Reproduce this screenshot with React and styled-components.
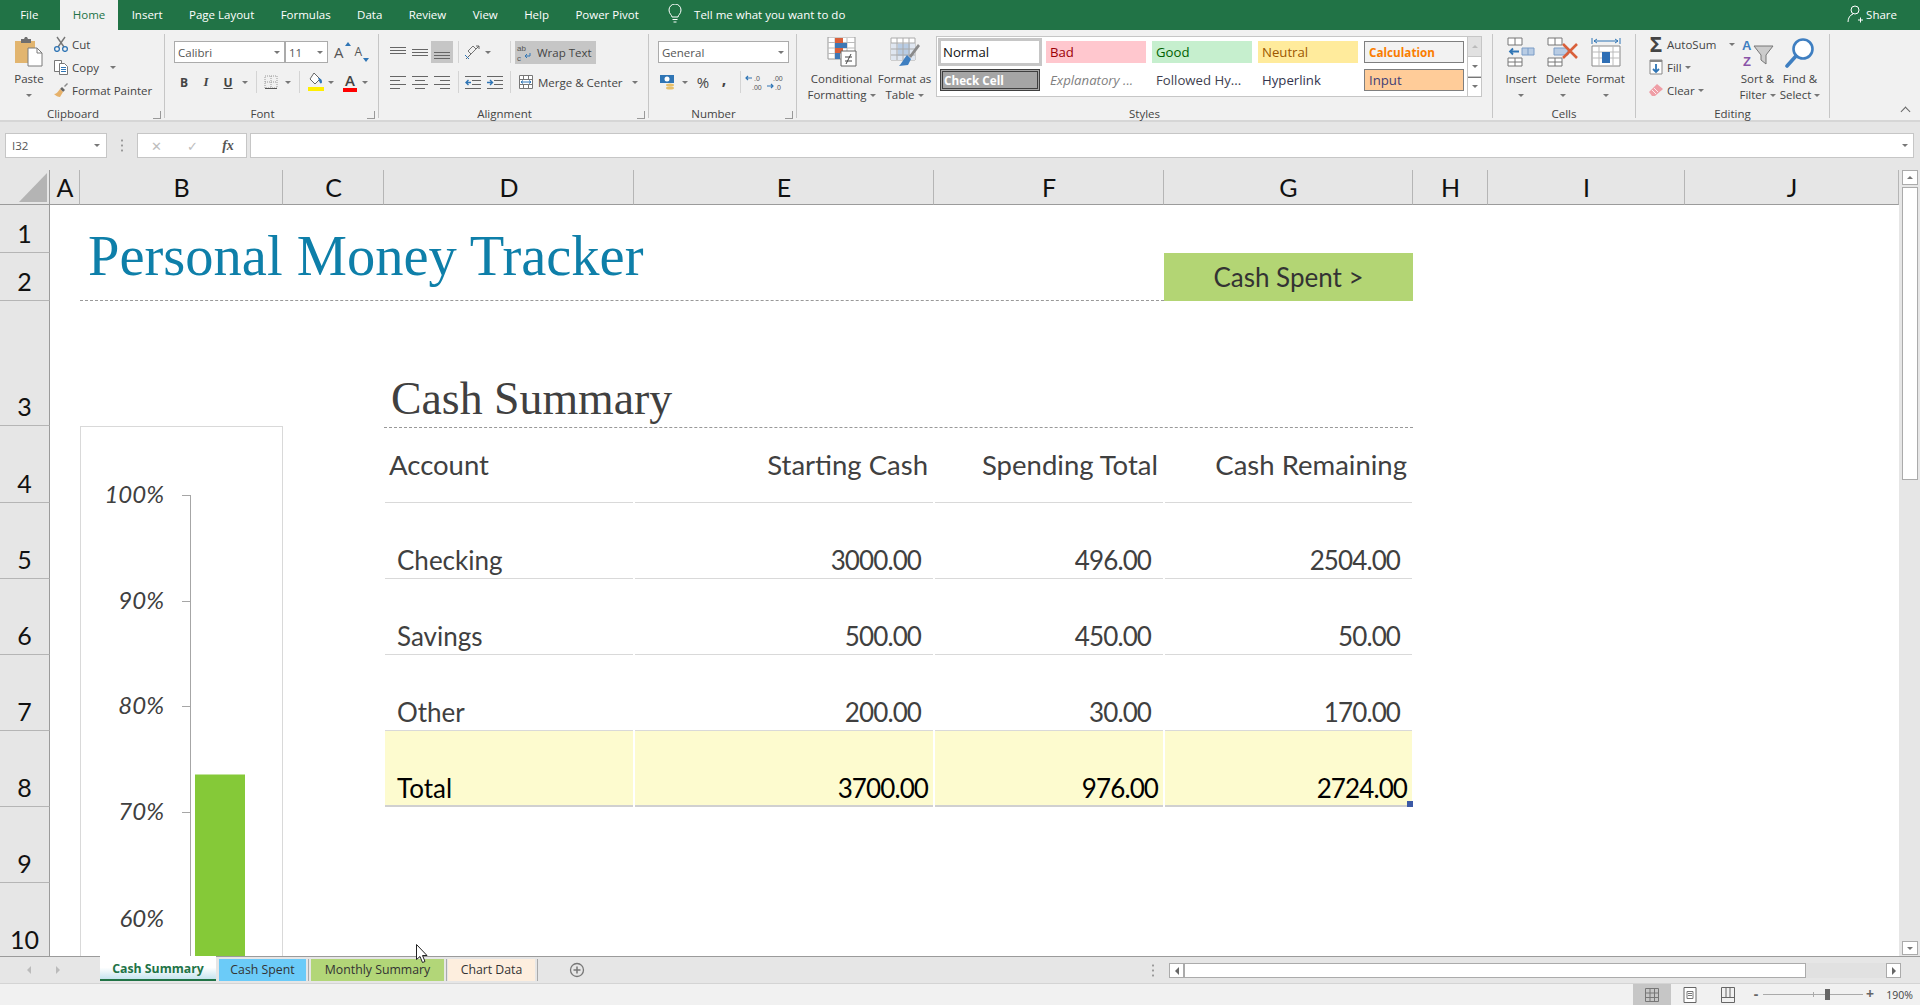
import React from 'react'
import styled, { createGlobalStyle } from 'styled-components'

const UI = '"Open Sans", "Noto Sans", sans-serif'
const CALIBRI = 'Lato, "Noto Sans", sans-serif'
const SERIF = '"Liberation Serif", serif'
const ARIAL = '"Liberation Sans", sans-serif'

const GlobalStyle = createGlobalStyle`
  html, body { margin: 0; padding: 0; background: #fff; overflow: hidden; }
  * { box-sizing: border-box; }
`

function Svg({ w = 16, h = 16, children }) {
    return <svg width={w} height={h} viewBox={`0 0 ${w} ${h}`} style={{ display: 'block' }}>{children}</svg>
}

const PasteIcon = () => (
    <Svg w={30} h={30}>
        <path d="M1 4h20v22H1z" fill="#e2b56f" />
        <path d="M7 2h3l1-2h2l1 2h3v4H7z" fill="#6f6f6f" />
        <path d="M14 11h9l5 5v13H14z" fill="#fff" stroke="#7a7a7a" />
        <path d="M23 11v5h5" fill="none" stroke="#7a7a7a" />
    </Svg>
)
const CutIcon = () => (
    <Svg>
        <path d="M4 1l7 10M12 1L5 11" stroke="#777" strokeWidth="1.4" fill="none" />
        <circle cx="4" cy="13" r="2.4" fill="none" stroke="#2f75b5" strokeWidth="1.3" />
        <circle cx="12" cy="13" r="2.4" fill="none" stroke="#2f75b5" strokeWidth="1.3" />
    </Svg>
)
const CopyIcon = () => (
    <Svg>
        <path d="M1.5 1.5h7v11h-7z" fill="#fff" stroke="#777" />
        <path d="M6.5 4.5h5l3 3v8h-8z" fill="#fff" stroke="#777" />
        <path d="M8 8.5h5M8 10.5h5M8 12.5h5" stroke="#2f75b5" />
    </Svg>
)
const BrushIcon = () => (
    <Svg>
        <path d="M9 5l3 3-2 2-3-3z" fill="#666" />
        <path d="M11 4l3-3 1 1-3 3z" fill="#8a8a8a" />
        <path d="M7 7l3 3-3 5c-2 0-4-1-6-3 2 0 4-2 6-5z" fill="#e6b16a" />
    </Svg>
)
const TinyTriangle = ({ down }) => (
    <Svg w={6} h={4}><path d={down ? 'M0 0h6L3 4z' : 'M3 0l3 4H0z'} fill="#2f75b5" /></Svg>
)
const BordersIcon = () => (
    <Svg>
        <path d="M2 2h12v12H2z" fill="none" stroke="#999" strokeDasharray="1 1" />
        <path d="M8 2v12M2 8h12" stroke="#999" strokeDasharray="1 1" />
        <path d="M2 14.5h12" stroke="#555" />
    </Svg>
)
const FillIcon = () => (
    <Svg h={20}>
        <path d="M6 1l6 6-5 5-5-5z" fill="#fff" stroke="#666" />
        <path d="M10 6c2 0 4 1 4 4 0 1-1 2-2 1-1-2-1-3-2-5z" fill="#2f75b5" />
        <path d="M0 15h16v4H0z" fill="#ffee00" />
    </Svg>
)
const Lines = ({ rows }) => (
    <Svg w={18} h={16}>
        {rows.map(([x1, x2, y]) => <path key={y} d={`M${x1} ${y}.5H${x2}`} stroke="#666" />)}
    </Svg>
)
const OrientIcon = () => (
    <Svg w={18} h={18}>
        <path d="M2 16L15 3M12 3h3v3" stroke="#666" fill="none" />
        <path d="M4 8l5-5 3 3-5 5z" fill="none" stroke="#777" />
        <path d="M1 12l4 4" stroke="#2f75b5" />
    </Svg>
)
const WrapIcon = () => (
    <Svg w={18} h={20}>
        <text x="1" y="9" fontFamily={ARIAL} fontSize="8" fill="#555">ab</text>
        <text x="1" y="18.500" fontFamily={ARIAL} fontSize="8" fill="#555">c</text>
        <path d="M14 11v3H9M11 12l-2 2 2 2" fill="none" stroke="#2f75b5" />
    </Svg>
)
const IndentIcon = ({ flip }) => (
    <Svg w={18} h={16}>
        <path d="M1 2.5h16M8 6.5h9M8 10.5h9M1 14.5h16" stroke="#666" />
        <path d={flip ? 'M1 8.5h5M4 6l2.500 2.500L4 11' : 'M7 8.500H2M4.500 6L2 8.500 4.500 11'} fill="none" stroke="#2f75b5" strokeWidth="1.4" />
    </Svg>
)
const MergeIcon = () => (
    <Svg>
        <path d="M1.500 1.500h13v13h-13z" fill="#fff" stroke="#777" />
        <path d="M1 5.500h14M1 10.500h14M5.500 1v4M10.500 1v4M5.500 11v4M10.500 11v4" stroke="#777" />
        <path d="M3 8h10M5 6.500L3 8l2 1.500M11 6.500L13 8l-2 1.500" stroke="#2f75b5" fill="none" />
    </Svg>
)
const MoneyIcon = () => (
    <Svg w={18} h={18}>
        <path d="M1 2h14v8H1z" fill="#2f75b5" />
        <circle cx="8" cy="6" r="2.500" fill="#fff" />
        <ellipse cx="11" cy="12" rx="4" ry="1.500" fill="#e8c06a" />
        <ellipse cx="11" cy="15" rx="4" ry="1.500" fill="#e8c06a" />
    </Svg>
)
const DecimalIcon = ({ more }) => (
    <Svg w={20} h={18}>
        <text x={more ? 9 : 7} y="8" fontFamily={ARIAL} fontSize="7" fill="#555">{more ? '.0' : '.00'}</text>
        <text x={more ? 7 : 9} y="16.500" fontFamily={ARIAL} fontSize="7" fill="#555">{more ? '.00' : '.0'}</text>
        <path d={more ? 'M7 5H1M3 3L1 5l2 2' : 'M1 13h6M5 11l2 2-2 2'} fill="none" stroke="#2f75b5" strokeWidth="1.200" />
    </Svg>
)
const CondIcon = () => (
    <Svg w={30} h={30}>
        <path d="M1 0h27v22H1z" fill="#fff" stroke="#999" />
        <path d="M8 1v21M20 1v21M1 5.500h27M1 11h27M1 16.500h27" stroke="#bbb" />
        <path d="M8 1h8v5H8z" fill="#d9603b" />
        <path d="M8 6h12v5H8z" fill="#3e78b5" />
        <path d="M8 11h8v5H8z" fill="#d9603b" />
        <path d="M8 16h5v6H8z" fill="#3e78b5" />
        <path d="M14 14h15v15H14z" fill="#fff" stroke="#666" />
        <path d="M18 20h7M18 24h7M24 17l-5 10" stroke="#444" />
    </Svg>
)
const TableIcon = () => (
    <Svg w={30} h={30}>
        <path d="M1 1h24v22H1z" fill="#fff" stroke="#aaa" />
        <path d="M1 6h24v17H1z" fill="#dfe6f0" />
        <path d="M8 7h12v12H8z" fill="#b8cce4" />
        <path d="M7 1v22M13 1v22M19 1v22M1 6h24M1 12h24M1 18h24" stroke="#aaa" />
        <path d="M19 19L28 7l2 2-9 12z" fill="#8a8a8a" />
        <path d="M17 18l4 4-3 6-9 1c2-2 4-6 8-11z" fill="#3f7fc1" />
    </Svg>
)
const InsertIcon = () => (
    <Svg w={28} h={30}>
        <path d="M1 1h14v7H1zM8 1v7M1 21h14v8H1zM8 21v8M1 25h14" fill="#fff" stroke="#777" />
        <path d="M15 11h12v7H15z" fill="#b8cce4" stroke="#7a9cc6" />
        <path d="M21 11v7" stroke="#7a9cc6" />
        <path d="M12 14.500H3M6 11.500l-3 3 3 3" fill="none" stroke="#2f75b5" strokeWidth="1.800" />
    </Svg>
)
const DeleteIcon = () => (
    <Svg w={32} h={30}>
        <path d="M1 1h14v7H1zM8 1v7M1 21h14v8H1zM8 21v8M1 25h14" fill="#fff" stroke="#777" />
        <path d="M7 11h14v7H7z" fill="#b8cce4" stroke="#7a9cc6" />
        <path d="M16 7l14 14M30 7L16 21" stroke="#d9603b" strokeWidth="2.600" />
    </Svg>
)
const FormatIcon = () => (
    <Svg w={30} h={32}>
        <path d="M1 1v6M29 1v6M3 4h24M3 4l3-2M3 4l3 2M27 4l-3-2M27 4l-3 2" fill="none" stroke="#2f75b5" />
        <path d="M1 9h28v20H1z" fill="#fff" stroke="#888" />
        <path d="M8 9v20M22 9v20M1 15h28M1 21h28" stroke="#bbb" />
        <path d="M11 15h8v11h-8z" fill="#2f6fb5" />
    </Svg>
)
const FillDownIcon = () => (
    <Svg>
        <path d="M2 1h12v14H2z" fill="#fff" stroke="#888" />
        <path d="M2 1h12v2H2z" fill="#888" />
        <path d="M8 5v8M5 10l3 3 3-3" stroke="#2f75b5" strokeWidth="1.800" fill="none" />
    </Svg>
)
const EraserIcon = () => (
    <Svg>
        <path d="M1 10l8-8 6 5-8 7H4z" fill="#ef9ea6" />
        <path d="M4 8l4 4M6 6l4 4" stroke="#fff" strokeWidth=".8" />
    </Svg>
)
const SortIcon = () => (
    <Svg w={32} h={31}>
        <text x="0" y="12.500" fontFamily={ARIAL} fontSize="13" fontWeight="700" fill="#3f7fc1">A</text>
        <text x="1" y="28.500" fontFamily={ARIAL} fontSize="13" fontWeight="700" fill="#8a54a8">Z</text>
        <path d="M12 9h19l-7 9v9l-5-4v-5z" fill="#ccc" stroke="#777" />
    </Svg>
)
const FindIcon = () => (
    <Svg w={30} h={32}>
        <circle cx="18" cy="12" r="9.500" fill="#fff" stroke="#3f7fc1" strokeWidth="2.600" />
        <path d="M11 19L2 29" stroke="#3f7fc1" strokeWidth="3.600" strokeLinecap="round" />
    </Svg>
)
const BulbIcon = () => (
    <Svg w={14} h={20}>
        <path d="M4 13c0-2-3-3-3-7a6 6 0 0 1 12 0c0 4-3 5-3 7zM4.500 15.500h5M5.500 18h3" fill="none" stroke="#fff" />
    </Svg>
)
const PersonIcon = () => (
    <Svg w={16} h={18}>
        <circle cx="8" cy="5" r="4" fill="none" stroke="#fff" />
        <path d="M1 17c0-4 2-7 5-8M11 15h5M13.500 12.500v5" fill="none" stroke="#fff" />
    </Svg>
)
const PlusIcon = () => (
    <Svg w={16} h={16}>
        <circle cx="8" cy="8" r="6.500" fill="none" stroke="#777" strokeWidth="1.300" />
        <path d="M4.500 8h7M8 4.500v7" stroke="#777" strokeWidth="1.500" />
    </Svg>
)
const GridViewIcon = () => (
    <Svg w={14} h={14}>
        <path d="M.5.500h13v13H.5zM5 .5v13M9.500.5v13M.5 5h13M.5 9.500h13" fill="none" stroke="#777" />
    </Svg>
)
const PageViewIcon = () => (
    <Svg w={14} h={16}>
        <path d="M1 .5h12v15H1z" fill="#fff" stroke="#666" />
        <path d="M4 4.500h6v7H4zM5 6.500h4M5 8.500h4" fill="none" stroke="#777" />
    </Svg>
)
const BreakViewIcon = () => (
    <Svg w={14} h={16}>
        <path d="M.5.500h13v15H.5zM.5 10.500h13M5 .5v10M9 .5v10" fill="none" stroke="#666" />
    </Svg>
)

const tabs = ['File', 'Home', 'Insert', 'Page Layout', 'Formulas', 'Data', 'Review', 'View', 'Help', 'Power Pivot']
const columns = ['A', 'B', 'C', 'D', 'E', 'F', 'G', 'H', 'I', 'J']
const rowNumbers = [1, 2, 3, 4, 5, 6, 7, 8, 9, 10]
const accounts = [
    ['Checking', '3000.00', '496.00', '2504.00'],
    ['Savings', '500.00', '450.00', '50.00'],
    ['Other', '200.00', '30.00', '170.00'],
]
const ticks = [[69, '100%'], [175, '90%'], [280, '80%'], [386, '70%'], [492.5, '60%']]
const cellStyles = [
    ['Bad', 'bad'], ['Good', 'good'], ['Neutral', 'neutral'], ['Calculation', 'calc'],
    ['Check Cell', 'check'], ['Explanatory ...', 'explain'], ['Followed Hy...', 'followed'], ['Hyperlink', 'link'], ['Input', 'input'],
]

function BigButton({ icon, lines, w, caret, trailing }) {
    return (
        <BigWrap $w={w}>
            <BigIcon>{icon}</BigIcon>
            {lines.map((line, i) => (
                <BigLine key={line}>
                    {line}
                    {trailing && i === lines.length - 1 && <Caret $ml={3} />}
                </BigLine>
            ))}
            {caret && <BigLine><Caret /></BigLine>}
        </BigWrap>
    )
}

function Small({ icon, label, children }) {
    return (
        <SmallRow>
            <SmallIcon>{icon}</SmallIcon>
            {label}
            {children}
        </SmallRow>
    )
}

function Group({ label, w, launcher, children }) {
    return (
        <GroupWrap $w={w}>
            <GroupBody>{children}</GroupBody>
            <GroupLabel $launcher={launcher}>
                {label}
                {launcher && <Launcher />}
            </GroupLabel>
        </GroupWrap>
    )
}

export default function App() {
    return (
        <Page>
            <GlobalStyle />
            <TitleBar>
                {tabs.map(t => <Tab key={t} $active={t === 'Home'}>{t}</Tab>)}
                <TellMe><BulbIcon /> Tell me what you want to do</TellMe>
                <Share><PersonIcon /> Share</Share>
            </TitleBar>

            <Ribbon>
                <Group label="Clipboard" w={165} launcher>
                    <Row $pl={6}>
                        <BigButton w={46} icon={<PasteIcon />} lines={['Paste']} caret />
                        <SmallColumn $w={112}>
                            <Small icon={<CutIcon />} label="Cut" />
                            <Small icon={<CopyIcon />} label="Copy"><Caret $ml={8} /></Small>
                            <Small icon={<BrushIcon />} label="Format Painter" />
                        </SmallColumn>
                    </Row>
                </Group>

                <Group label="Font" w={214} launcher>
                    <ToolRows $pl={8}>
                        <ToolRow>
                            <ComboBox $w={111} $ml={1}>Calibri<Caret $auto /></ComboBox>
                            <ComboBox $w={43}>11<Caret $auto /></ComboBox>
                            <FontStep $ml={6}>A<TinyTriangle /></FontStep>
                            <FontStep $small $ml={4}>A<TinyTriangle down /></FontStep>
                        </ToolRow>
                        <ToolRow>
                            <Tool $w={22}><Bold>B</Bold></Tool>
                            <Tool $w={22}><Ital>I</Ital></Tool>
                            <Tool $w={22}><Under>U</Under></Tool>
                            <CaretBox $w={12}><Caret /></CaretBox>
                            <Sep $ml={5} $mr={3} />
                            <Tool $w={22}><BordersIcon /></Tool>
                            <CaretBox $w={12}><Caret /></CaretBox>
                            <Sep $ml={5} $mr={5} />
                            <Tool $w={22}><FillIcon /></Tool>
                            <CaretBox $w={8}><Caret /></CaretBox>
                            <Tool $w={22} $ml={4}><FontColor>A</FontColor></Tool>
                            <CaretBox $w={8}><Caret /></CaretBox>
                        </ToolRow>
                    </ToolRows>
                </Group>

                <Group label="Alignment" w={270} launcher>
                    <ToolRows $pl={8}>
                        <ToolRow>
                            <Tool $w={22}><Lines rows={[[1, 17, 3], [1, 17, 6], [1, 17, 9]]} /></Tool>
                            <Tool $w={22}><Lines rows={[[1, 17, 5], [1, 17, 8], [1, 17, 11]]} /></Tool>
                            <Tool $w={22} $active><Lines rows={[[1, 17, 8], [1, 17, 11], [1, 17, 14]]} /></Tool>
                            <Sep $ml={5} $mr={3} />
                            <Tool $w={22}><OrientIcon /></Tool>
                            <CaretBox $w={8}><Caret /></CaretBox>
                            <Sep $ml={18} $mr={4} />
                            <WrapButton><WrapIcon />Wrap Text</WrapButton>
                        </ToolRow>
                        <ToolRow>
                            <Tool $w={22}><Lines rows={[[1, 17, 2], [1, 11, 6], [1, 17, 10], [1, 11, 14]]} /></Tool>
                            <Tool $w={22}><Lines rows={[[1, 17, 2], [4, 14, 6], [1, 17, 10], [4, 14, 14]]} /></Tool>
                            <Tool $w={22}><Lines rows={[[1, 17, 2], [7, 17, 6], [1, 17, 10], [7, 17, 14]]} /></Tool>
                            <Sep $ml={5} $mr={3} />
                            <Tool $w={22}><IndentIcon /></Tool>
                            <Tool $w={22}><IndentIcon flip /></Tool>
                            <Sep $ml={4} $mr={7} />
                            <MergeButton><MergeIcon />Merge &amp; Center<Caret $ml={5} /></MergeButton>
                        </ToolRow>
                    </ToolRows>
                </Group>

                <Group label="Number" w={148} launcher>
                    <ToolRows $pl={8}>
                        <ToolRow>
                            <ComboBox $w={131} $ml={1}>General<Caret $auto /></ComboBox>
                        </ToolRow>
                        <ToolRow>
                            <Tool $w={22}><MoneyIcon /></Tool>
                            <CaretBox $w={12}><Caret /></CaretBox>
                            <Tool $w={22} $ml={1}><Percent>%</Percent></Tool>
                            <Tool $w={22} $ml={-1}><Comma>,</Comma></Tool>
                            <Sep $ml={5} $mr={3} />
                            <Tool $w={22}><DecimalIcon more /></Tool>
                            <Tool $w={22} $ml={-1}><DecimalIcon /></Tool>
                        </ToolRow>
                    </ToolRows>
                </Group>

                <Group label="Styles" w={696}>
                    <Row $pl={13}>
                        <BigButton w={63} icon={<CondIcon />} lines={['Conditional', 'Formatting']} trailing />
                        <BigButton w={63} icon={<TableIcon />} lines={['Format as', 'Table']} trailing />
                        <Gallery>
                            <StyleGrid>
                                <NormalStyle>Normal</NormalStyle>
                                {cellStyles.map(([name, kind]) => <StyleCell key={name} $kind={kind}>{name}</StyleCell>)}
                            </StyleGrid>
                            <GalleryScroll>
                                <GalleryBtn $off><Caret $up $light /></GalleryBtn>
                                <GalleryBtn><Caret /></GalleryBtn>
                                <GalleryBtn $more><Caret /></GalleryBtn>
                            </GalleryScroll>
                        </Gallery>
                    </Row>
                </Group>

                <Group label="Cells" w={143}>
                    <Row $pl={7}>
                        <BigButton w={42} icon={<InsertIcon />} lines={['Insert']} caret />
                        <BigButton w={42} icon={<DeleteIcon />} lines={['Delete']} caret />
                        <BigButton w={43} icon={<FormatIcon />} lines={['Format']} caret />
                    </Row>
                </Group>

                <Group label="Editing" w={194}>
                    <Row $pl={11}>
                        <SmallColumn $w={88}>
                            <Small icon={<Sigma>Σ</Sigma>} label="AutoSum"><Caret $ml={10} /></Small>
                            <Small icon={<FillDownIcon />} label="Fill"><Caret $ml={0} /></Small>
                            <Small icon={<EraserIcon />} label="Clear"><Caret $ml={0} /></Small>
                        </SmallColumn>
                        <BigButton w={43} icon={<SortIcon />} lines={['Sort &', 'Filter']} trailing />
                        <BigButton w={42} icon={<FindIcon />} lines={['Find &', 'Select']} trailing />
                    </Row>
                </Group>
                <Collapse><CollapseMark /></Collapse>
            </Ribbon>

            <FormulaBar>
                <NameBox>I32<Caret $auto /></NameBox>
                <Grip />
                <FormulaButtons>
                    <FxMark $gray>✕</FxMark>
                    <FxMark $gray>✓</FxMark>
                    <FxMark $serif>fx</FxMark>
                </FormulaButtons>
                <FormulaInput><Caret $auto /></FormulaInput>
            </FormulaBar>

            <SheetArea>
                <Sheet>
                    <Corner><CornerMark /></Corner>
                    {columns.map(c => <ColHead key={c}>{c}</ColHead>)}
                    {rowNumbers.map(n => <RowHead key={n} $row={n + 1}>{n}</RowHead>)}

                    <TitleCell>Personal Money Tracker</TitleCell>
                    <CashButton>Cash Spent &gt;</CashButton>
                    <SummaryTitle>Cash Summary</SummaryTitle>

                    <HeadCell $col={5} $left>Account</HeadCell>
                    <HeadCell $col={6}>Starting Cash</HeadCell>
                    <HeadCell $col={7}>Spending Total</HeadCell>
                    <HeadCell $col={8}>Cash Remaining</HeadCell>

                    {accounts.map((row, r) => row.map((value, c) => (
                        <DataCell key={value + c} $col={c + 5} $row={r + 6} $left={c === 0}>{value}</DataCell>
                    )))}

                    <TotalCell $col={5} $left>Total</TotalCell>
                    <TotalCell $col={6}>3700.00</TotalCell>
                    <TotalCell $col={7}>976.00</TotalCell>
                    <TotalCell $col={8}>2724.00<FillHandle /></TotalCell>

                    <Chart>
                        <svg width="201" height="530" viewBox="1 1 201 530" style={{ display: 'block' }}>
                            <path d="M110.500 69V530" stroke="#a6a6a6" />
                            {ticks.map(([y, label]) => (
                                <g key={label}>
                                    <path d={`M102 ${y}.5H110`} stroke="#a6a6a6" />
                                    <ChartLabel x="84" y={y + 8}>{label}</ChartLabel>
                                </g>
                            ))}
                            <rect x="115" y="348.500" width="50" height="182" fill="#85c938" />
                        </svg>
                    </Chart>
                </Sheet>
                <VScroll>
                    <ScrollBtn $h={15}><Caret $up /></ScrollBtn>
                    <VThumb />
                    <ScrollBtn $h={14}><Caret /></ScrollBtn>
                </VScroll>
            </SheetArea>

            <TabStrip>
                <TabNav><NavArrow $left /><NavArrow /></TabNav>
                <ActiveSheet>Cash Summary</ActiveSheet>
                <SheetTab $bg="#6bcbf8" $w={87} $ml={3}>Cash Spent</SheetTab>
                <SheetTab $bg="#b2d678" $w={133} $ml={5}>Monthly Summary</SheetTab>
                <SheetTab $bg="#fdeede" $w={87} $ml={4}>Chart Data</SheetTab>
                <AddSheet><PlusIcon /></AddSheet>
                <HScroll>
                    <HGrip />
                    <HBtn><NavArrow $left $dark /></HBtn>
                    <HThumb />
                    <HTrack />
                    <HBtn><NavArrow $dark /></HBtn>
                </HScroll>
            </TabStrip>

            <StatusBar>
                <ViewBtn $active><GridViewIcon /></ViewBtn>
                <ViewBtn><PageViewIcon /></ViewBtn>
                <ViewBtn><BreakViewIcon /></ViewBtn>
                <ZoomSign $ml={4}>-</ZoomSign>
                <ZoomTrack><ZoomCenter /><ZoomThumb /></ZoomTrack>
                <ZoomSign>+</ZoomSign>
                <ZoomValue>190%</ZoomValue>
            </StatusBar>

            <Pointer>
                <svg width="12" height="19" viewBox="0 0 12 19" style={{ display: 'block' }}>
                    <path d="M.5.500v15l3.500-3 2.500 6 2.500-1-2.500-6H11z" fill="#fff" stroke="#222" />
                </svg>
            </Pointer>
        </Page>
    )
}

const Page = styled.div`
    position: relative;
    width: 1920px;
    height: 1005px;
    display: flex;
    flex-direction: column;
    overflow: hidden;
    font-family: ${UI};
    font-size: 11.5px;
    color: #444;
    background: #f1f1f1;
`
const TitleBar = styled.div`
    height: 30px;
    flex: none;
    display: flex;
    align-items: stretch;
    padding-left: 7px;
    background: #217346;
`
const Tab = styled.div`
    padding: 0 13.2px 2px;
    display: flex;
    align-items: center;
    color: ${p => (p.$active ? '#217346' : '#fff')};
    background: ${p => (p.$active ? '#f1f1f1' : 'transparent')};
    &:first-child {
        margin-right: 8px;
    }
`
const TellMe = styled.div`
    display: flex;
    align-items: center;
    gap: 12px;
    margin-left: 16px;
    padding-bottom: 2px;
    color: #fff;
`
const Share = styled.div`
    margin-left: auto;
    margin-right: 23px;
    padding-bottom: 2px;
    display: flex;
    align-items: center;
    gap: 3px;
    color: #fff;
`
const Ribbon = styled.div`
    height: 92px;
    flex: none;
    display: flex;
    padding-top: 4px;
    border-bottom: 2px solid #d6d6d6;
`
const GroupWrap = styled.div`
    width: ${p => p.$w}px;
    height: 84px;
    flex: none;
    display: flex;
    flex-direction: column;
    border-right: 1px solid #c6c6c6;
`
const GroupBody = styled.div`
    height: 72px;
    flex: none;
`
const GroupLabel = styled.div`
    position: relative;
    height: 16px;
    padding-right: ${p => (p.$launcher ? '18px' : '0')};
    text-align: center;
    line-height: 16px;
`
const Launcher = styled.span`
    position: absolute;
    right: 3px;
    bottom: 3px;
    width: 8px;
    height: 8px;
    border-left: 1px solid #999;
    border-bottom: 1px solid #999;
    transform: scaleX(-1);
`
const Row = styled.div`
    display: flex;
    padding-left: ${p => p.$pl || 0}px;
`
const BigWrap = styled.div`
    width: ${p => p.$w}px;
    flex: none;
    display: flex;
    flex-direction: column;
    align-items: center;
`
const BigIcon = styled.div`
    height: 37px;
    padding-top: 3px;
`
const BigLine = styled.div`
    height: 16px;
    line-height: 16px;
    white-space: nowrap;
    display: flex;
    align-items: center;
`
const SmallColumn = styled.div`
    width: ${p => p.$w}px;
    margin-top: -1px;
    margin-left: 1px;
    display: flex;
    flex-direction: column;
    gap: 1px;
`
const SmallRow = styled.div`
    height: 22px;
    display: flex;
    align-items: center;
    gap: 3px;
    white-space: nowrap;
`
const SmallIcon = styled.span`
    width: 16px;
    display: flex;
    justify-content: center;
`
const Sigma = styled.span`
    font-size: 21px;
    line-height: 20px;
    font-weight: 700;
    color: #444;
`
const Caret = styled.span`
    display: inline-block;
    flex: none;
    width: 0;
    height: 0;
    margin-left: ${p => (p.$auto ? 'auto' : `${p.$ml || 0}px`)};
    border-left: 3px solid transparent;
    border-right: 3px solid transparent;
    border-top: ${p => (p.$up ? '0' : `3.5px solid ${p.$light ? '#bbb' : '#777'}`)};
    border-bottom: ${p => (p.$up ? `3.5px solid ${p.$light ? '#bbb' : '#777'}` : '0')};
`
const ToolRows = styled.div`
    padding: 7px 0 0 ${p => p.$pl}px;
    display: flex;
    flex-direction: column;
    gap: 8px;
`
const ToolRow = styled.div`
    height: 22px;
    display: flex;
    align-items: center;
`
const ComboBox = styled.div`
    width: ${p => p.$w}px;
    height: 22px;
    margin-left: ${p => p.$ml || 0}px;
    padding: 0 4px 0 3px;
    display: flex;
    align-items: center;
    background: #fff;
    border: 1px solid #ababab;
    color: #555;
`
const FontStep = styled.div`
    display: flex;
    margin-left: ${p => p.$ml}px;
    font-size: ${p => (p.$small ? 12 : 15)}px;
    line-height: 20px;
    align-items: ${p => (p.$small ? 'flex-end' : 'flex-start')};
    color: #555;
    gap: 1px;
`
const Tool = styled.div`
    width: ${p => p.$w}px;
    height: 22px;
    flex: none;
    margin-left: ${p => p.$ml || 0}px;
    display: flex;
    align-items: center;
    justify-content: center;
    background: ${p => (p.$active ? '#c6c6c6' : 'transparent')};
`
const CaretBox = styled.div`
    width: ${p => p.$w}px;
    flex: none;
    display: flex;
    justify-content: center;
`
const Sep = styled.div`
    width: 1px;
    height: 22px;
    flex: none;
    margin: 0 ${p => p.$mr}px 0 ${p => p.$ml}px;
    background: #d4d4d4;
`
const Bold = styled.span`
    font-weight: 700;
    font-size: 12px;
`
const Ital = styled.span`
    font-style: italic;
    font-family: ${SERIF};
    font-weight: 700;
    font-size: 13px;
`
const Under = styled.span`
    font-weight: 700;
    font-size: 12px;
    text-decoration: underline;
`
const FontColor = styled.span`
    font-size: 15px;
    line-height: 15px;
    font-weight: 600;
    border-bottom: 4px solid #f00;
    padding: 0 2px;
`
const Percent = styled.span`
    font-size: 15px;
`
const Comma = styled.span`
    font-size: 16px;
    font-weight: 700;
    margin-top: -6px;
`
const WrapButton = styled.div`
    width: 81px;
    height: 23px;
    padding-left: 1px;
    display: flex;
    align-items: center;
    gap: 3px;
    background: #c6c6c6;
    white-space: nowrap;
`
const MergeButton = styled.div`
    display: flex;
    align-items: center;
    gap: 4px;
    white-space: nowrap;
`
const Gallery = styled.div`
    width: 546px;
    height: 61px;
    margin-top: 2px;
    flex: none;
    display: flex;
    border: 1px solid #c6c6c6;
    background: #fff;
`
const StyleGrid = styled.div`
    width: 530px;
    padding: 4px 0 0 3px;
    display: grid;
    grid-template-columns: repeat(5, 100px);
    grid-template-rows: 22px 22px;
    gap: 6px;
    font-size: 13.2px;
`
const StyleCell = styled.div`
    display: flex;
    align-items: center;
    padding-left: 4px;
    white-space: nowrap;
    ${p => ({
        bad: 'background:#ffc7ce;color:#9c0006;',
        good: 'background:#c6efce;color:#006100;',
        neutral: 'background:#ffeb9c;color:#9c5700;',
        calc: 'background:#f2f2f2;color:#fa7d00;font-weight:700;border:1px solid #7f7f7f;font-size:11.7px;',
        check: 'background:#a5a5a5;color:#fff;font-weight:700;border:3px double #3f3f3f;font-size:11.7px;padding-left:1px;',
        explain: 'color:#7f7f7f;font-style:italic;',
        followed: 'color:#3f3f50;',
        link: 'color:#33334d;',
        input: 'background:#ffcc99;color:#3f3f76;border:1px solid #7f7f7f;',
    }[p.$kind])}
`
const NormalStyle = styled(StyleCell)`
    color: #111;
    background: #fff;
    padding-left: 2px;
    outline: 3px solid #c6c6c6;
    outline-offset: 0;
    margin: 0 1px;
`
const GalleryScroll = styled.div`
    width: 14px;
    display: flex;
    flex-direction: column;
`
const GalleryBtn = styled.div`
    flex: 1;
    display: flex;
    align-items: center;
    justify-content: center;
    background: ${p => (p.$off ? '#e1e1e1' : '#fff')};
    border-left: 1px solid #c6c6c6;
    border-top: ${p => (p.$off ? '0' : '1px solid #c6c6c6')};
    ${p => p.$more && 'box-shadow: inset 0 4px 0 -3px #777;'}
`
const Collapse = styled.div`
    flex: 1;
    display: flex;
    align-items: flex-end;
    justify-content: flex-end;
    padding: 0 11px 5px 0;
`
const CollapseMark = styled.span`
    width: 7px;
    height: 7px;
    border-left: 1.5px solid #666;
    border-top: 1.5px solid #666;
    transform: rotate(45deg);
`
const FormulaBar = styled.div`
    height: 48px;
    flex: none;
    padding: 11px 6px 12px 5px;
    display: flex;
    align-items: stretch;
    background: #e6e6e6;
`
const NameBox = styled.div`
    width: 102px;
    padding: 0 6px;
    display: flex;
    align-items: center;
    background: #fff;
    border: 1px solid #c6c6c6;
    color: #555;
`
const Grip = styled.div`
    width: 30px;
    flex: none;
    background: radial-gradient(circle, #999 1px, transparent 1.200px) center / 2px 5px repeat-y;
    background-size: 2px 5px;
    margin: 6px 0;
`
const FormulaButtons = styled.div`
    width: 110px;
    flex: none;
    padding: 0 8px;
    display: flex;
    align-items: center;
    justify-content: space-between;
    background: #fff;
    border: 1px solid #c6c6c6;
`
const FxMark = styled.span`
    width: 20px;
    text-align: center;
    color: ${p => (p.$gray ? '#bdbdbd' : '#555')};
    font-size: ${p => (p.$gray ? 13 : 14)}px;
    ${p => p.$serif && `font-family: ${SERIF}; font-style: italic; font-weight: 700;`}
`
const FormulaInput = styled.div`
    flex: 1;
    margin-left: 3px;
    padding: 0 5px;
    display: flex;
    align-items: center;
    background: #fff;
    border: 1px solid #c6c6c6;
`
const SheetArea = styled.div`
    height: 786px;
    flex: none;
    display: flex;
    background: #fff;
`
const Sheet = styled.div`
    position: relative;
    width: 1899px;
    height: 786px;
    flex: none;
    overflow: hidden;
    display: grid;
    grid-template-columns: 50px 30px 203px 101px 250px 300px 230px 249px 75px 197px 214px;
    grid-template-rows: 35px 48px 48px 125px 77px 76px 76px 76px 76px 76px 76px;
    font-family: ${CALIBRI};
`
const Corner = styled.div`
    grid-column: 1;
    grid-row: 1;
    padding: 3px 0 0 19px;
    background: #e6e6e6;
    border-bottom: 1px solid #9b9b9b;
    border-right: 1px solid #9b9b9b;
`
const CornerMark = styled.div`
    width: 28px;
    height: 29px;
    background: #b4b4b4;
    clip-path: polygon(100% 0, 100% 100%, 0 100%);
`
const ColHead = styled.div`
    grid-row: 1;
    display: flex;
    align-items: center;
    justify-content: center;
    padding-left: 1px;
    font-size: 25px;
    color: #111;
    background: #e6e6e6;
    border-bottom: 1px solid #9b9b9b;
    border-right: 1px solid #b5b5b5;
`
const RowHead = styled.div`
    grid-column: 1;
    grid-row: ${p => p.$row};
    display: flex;
    align-items: flex-end;
    justify-content: center;
    padding-bottom: 4px;
    font-size: 25px;
    color: #111;
    background: #e6e6e6;
    border-bottom: 1px solid #b5b5b5;
    border-right: 1px solid #9b9b9b;
`
const TitleCell = styled.div`
    grid-column: 3 / 8;
    grid-row: 2 / 4;
    padding: 16px 0 0 8px;
    font-family: ${SERIF};
    font-size: 56.5px;
    line-height: 70px;
    color: #0e7fa9;
    white-space: nowrap;
    border-bottom: 1px dashed #999;
`
const CashButton = styled.div`
    grid-column: 8;
    grid-row: 3;
    display: flex;
    align-items: center;
    justify-content: center;
    font-size: 26px;
    color: #333;
    background: #b3d574;
`
const SummaryTitle = styled.div`
    grid-column: 5 / 9;
    grid-row: 4;
    display: flex;
    align-items: flex-end;
    margin-bottom: -2px;
    padding-left: 7px;
    font-family: ${SERIF};
    font-size: 45.8px;
    line-height: 56px;
    color: #404040;
    border-bottom: 1px dashed #999;
`
const HeadCell = styled.div`
    grid-column: ${p => p.$col};
    grid-row: 5;
    margin: 0 1px;
    padding: 1px ${p => (p.$left ? '0' : '5px')} 0 ${p => (p.$left ? '4px' : '0')};
    display: flex;
    align-items: center;
    justify-content: ${p => (p.$left ? 'flex-start' : 'flex-end')};
    font-size: 27.5px;
    color: #404040;
    border-bottom: 1px solid #d9d9d9;
`
const DataCell = styled.div`
    grid-column: ${p => p.$col};
    grid-row: ${p => p.$row};
    margin: 0 1px;
    padding: 0 ${p => (p.$left ? '0' : '12px')} 2px ${p => (p.$left ? '12px' : '0')};
    display: flex;
    align-items: flex-end;
    justify-content: ${p => (p.$left ? 'flex-start' : 'flex-end')};
    font-size: 26px;
    line-height: 32px;
    letter-spacing: ${p => (p.$left ? '0' : '-0.9px')};
    color: #404040;
    border-bottom: 1px solid #d9d9d9;
`
const TotalCell = styled(DataCell)`
    position: relative;
    grid-row: 9;
    padding: 0 ${p => (p.$left ? '0' : '5px')} 1px ${p => (p.$left ? '12px' : '0')};
    color: #000;
    background: #fdfbcf;
    border-bottom: 2px solid #d0d0d0;
`
const FillHandle = styled.span`
    position: absolute;
    right: -1px;
    bottom: -2px;
    width: 6px;
    height: 6px;
    background: #3c5aa6;
`
const Chart = styled.div`
    position: absolute;
    left: 80px;
    top: 256px;
    width: 203px;
    height: 540px;
    background: #fff;
    border: 1px solid #d9d9d9;
`
const ChartLabel = styled.text`
    font-family: ${CALIBRI};
    font-size: 24px;
    font-style: italic;
    fill: #404040;
    text-anchor: end;
`
const VScroll = styled.div`
    flex: 1;
    padding: 0 2px 1px 3px;
    display: flex;
    flex-direction: column;
    background: #e6e6e6;
`
const ScrollBtn = styled.div`
    height: ${p => p.$h}px;
    flex: none;
    display: flex;
    align-items: center;
    justify-content: center;
    background: #fff;
    border: 1px solid #ababab;
`
const VThumb = styled.div`
    height: 293px;
    margin: 2px 0 auto;
    background: #fff;
    border: 1px solid #ababab;
`
const TabStrip = styled.div`
    height: 28px;
    flex: none;
    display: flex;
    align-items: flex-start;
    background: #e6e6e6;
    border-top: 1px solid #9b9b9b;
    border-bottom: 1px solid #d4d4d4;
`
const TabNav = styled.div`
    width: 100px;
    height: 26px;
    padding: 0 40px 0 27px;
    display: flex;
    align-items: center;
    justify-content: space-between;
`
const NavArrow = styled.span`
    width: 0;
    height: 0;
    border-top: 4px solid transparent;
    border-bottom: 4px solid transparent;
    ${p => (p.$left ? 'border-right' : 'border-left')}: 4px solid ${p => (p.$dark ? '#666' : '#bbb')};
`
const ActiveSheet = styled.div`
    width: 116px;
    height: 25px;
    margin-top: -1px;
    padding-top: 2px;
    display: flex;
    align-items: center;
    justify-content: center;
    font-size: 12.3px;
    font-weight: 700;
    color: #217346;
    background: linear-gradient(#fff 50%, #c5e4ef);
    border-bottom: 2px solid #217346;
`
const SheetTab = styled.div`
    width: ${p => p.$w}px;
    height: 22px;
    margin: 2px 0 0 ${p => p.$ml}px;
    padding-bottom: 1px;
    display: flex;
    align-items: center;
    justify-content: center;
    font-size: 12.3px;
    color: #333;
    background: ${p => p.$bg};
    box-shadow: 2px 0 0 #e6e6e6, 3px 0 0 #aaa;
`
const AddSheet = styled.div`
    margin: 5px 0 0 34px;
`
const HScroll = styled.div`
    margin: 6px 19px 0 auto;
    height: 15px;
    display: flex;
`
const HGrip = styled(Grip)`
    width: 33px;
    margin: 0;
`
const HBtn = styled.div`
    width: 15px;
    flex: none;
    display: flex;
    align-items: center;
    justify-content: center;
    background: #fff;
    border: 1px solid #ababab;
`
const HThumb = styled.div`
    width: 622px;
    background: #fff;
    border: 1px solid #ababab;
`
const HTrack = styled.div`
    width: 80px;
    background: #e1e1e1;
`
const StatusBar = styled.div`
    flex: 1;
    display: flex;
    justify-content: flex-end;
    align-items: stretch;
    padding-right: 7px;
`
const ViewBtn = styled.div`
    width: 38px;
    display: flex;
    align-items: center;
    justify-content: center;
    background: ${p => (p.$active ? '#c6c6c6' : 'transparent')};
`
const ZoomSign = styled.div`
    width: 10px;
    margin-left: ${p => p.$ml || 0}px;
    text-align: center;
    font-size: 14px;
    line-height: 20px;
    font-weight: 700;
    color: #666;
`
const ZoomTrack = styled.div`
    position: relative;
    width: 100px;
    margin: 10px 2px 0;
    height: 1px;
    background: #aaa;
`
const ZoomCenter = styled.span`
    position: absolute;
    left: 50px;
    top: -2px;
    width: 1px;
    height: 5px;
    background: #aaa;
`
const ZoomThumb = styled.span`
    position: absolute;
    left: 62px;
    top: -5px;
    width: 5px;
    height: 11px;
    background: #666;
`
const ZoomValue = styled.div`
    width: 38px;
    display: flex;
    align-items: center;
    justify-content: flex-end;
    font-size: 10.5px;
`
const Pointer = styled.div`
    position: absolute;
    left: 416px;
    top: 944px;
`
